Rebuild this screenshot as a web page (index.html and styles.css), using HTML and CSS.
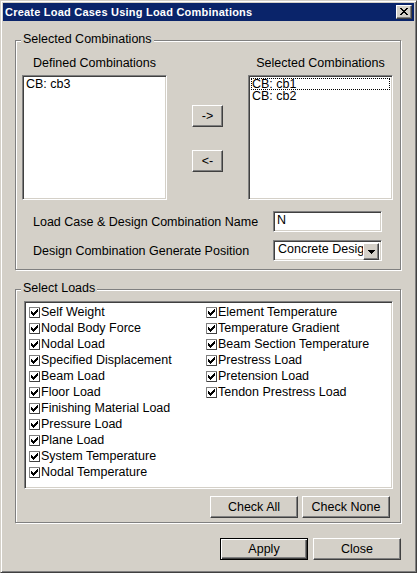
FILE: index.html
```html
<!DOCTYPE html>
<html>
<head>
<meta charset="utf-8">
<title>Create Load Cases Using Load Combinations</title>
<link rel="stylesheet" href="styles.css">
</head>
<body>
<div class="window">
  <div class="titlebar">
    <span class="title">Create Load Cases Using Load Combinations</span>
    <div class="close-btn raised">
      <svg width="8" height="7" viewBox="0 0 8 7" shape-rendering="crispEdges"><path fill="#000" d="M0 0h2v1H0zM6 0h2v1H6zM1 1h2v1H1zM5 1h2v1H5zM2 2h4v1H2zM3 3h2v1H3zM2 4h4v1H2zM1 5h2v1H1zM5 5h2v1H5zM0 6h2v1H0zM6 6h2v1H6z"/></svg>
    </div>
  </div>
  <div class="content">
    <div class="group group-combos">
      <span class="caption">Selected Combinations</span>
      <div class="combo-grid">
        <div class="col-label">Defined Combinations</div>
        <div></div>
        <div class="col-label">Selected Combinations</div>
        <div class="listbox sunken">
          <div class="list-item">CB: cb3</div>
        </div>
        <div class="move-btns">
          <div class="btn raised move">-&gt;</div>
          <div class="btn raised move">&lt;-</div>
        </div>
        <div class="listbox sunken">
          <div class="list-item focused">CB: cb1</div>
          <div class="list-item">CB: cb2</div>
        </div>
      </div>
      <div class="field-row first">
        <span class="field-label">Load Case &amp; Design Combination Name</span>
        <div class="textbox sunken">N</div>
      </div>
      <div class="field-row">
        <span class="field-label">Design Combination Generate Position</span>
        <div class="combo sunken">
          <span class="combo-text">Concrete Design</span>
          <div class="combo-arrow raised">
            <svg width="7" height="4" viewBox="0 0 7 4" shape-rendering="crispEdges"><path fill="#000" d="M0 0h7v1H0zM1 1h5v1H1zM2 2h3v1H2zM3 3h1v1H3z"/></svg>
          </div>
        </div>
      </div>
    </div>

    <div class="group group-loads">
      <span class="caption">Select Loads</span>
      <div class="checklist sunken">
        <div class="check-col first-col">
          <div class="check-item"><svg class="cb" width="11" height="11" viewBox="0 0 11 11" shape-rendering="crispEdges"><rect x="0" y="0" width="11" height="11" fill="#808080"/><rect x="1" y="1" width="10" height="10" fill="#404040"/><rect x="1" y="1" width="9" height="9" fill="#fff"/><path fill="#000" d="M2 4h1v3H2zM3 5h1v3H3zM4 6h1v3H4zM5 5h1v3H5zM6 4h1v3H6zM7 3h1v3H7zM8 2h1v3H8z"/></svg>Self Weight</div>
          <div class="check-item"><svg class="cb" width="11" height="11" viewBox="0 0 11 11" shape-rendering="crispEdges"><rect x="0" y="0" width="11" height="11" fill="#808080"/><rect x="1" y="1" width="10" height="10" fill="#404040"/><rect x="1" y="1" width="9" height="9" fill="#fff"/><path fill="#000" d="M2 4h1v3H2zM3 5h1v3H3zM4 6h1v3H4zM5 5h1v3H5zM6 4h1v3H6zM7 3h1v3H7zM8 2h1v3H8z"/></svg>Nodal Body Force</div>
          <div class="check-item"><svg class="cb" width="11" height="11" viewBox="0 0 11 11" shape-rendering="crispEdges"><rect x="0" y="0" width="11" height="11" fill="#808080"/><rect x="1" y="1" width="10" height="10" fill="#404040"/><rect x="1" y="1" width="9" height="9" fill="#fff"/><path fill="#000" d="M2 4h1v3H2zM3 5h1v3H3zM4 6h1v3H4zM5 5h1v3H5zM6 4h1v3H6zM7 3h1v3H7zM8 2h1v3H8z"/></svg>Nodal Load</div>
          <div class="check-item"><svg class="cb" width="11" height="11" viewBox="0 0 11 11" shape-rendering="crispEdges"><rect x="0" y="0" width="11" height="11" fill="#808080"/><rect x="1" y="1" width="10" height="10" fill="#404040"/><rect x="1" y="1" width="9" height="9" fill="#fff"/><path fill="#000" d="M2 4h1v3H2zM3 5h1v3H3zM4 6h1v3H4zM5 5h1v3H5zM6 4h1v3H6zM7 3h1v3H7zM8 2h1v3H8z"/></svg>Specified Displacement</div>
          <div class="check-item"><svg class="cb" width="11" height="11" viewBox="0 0 11 11" shape-rendering="crispEdges"><rect x="0" y="0" width="11" height="11" fill="#808080"/><rect x="1" y="1" width="10" height="10" fill="#404040"/><rect x="1" y="1" width="9" height="9" fill="#fff"/><path fill="#000" d="M2 4h1v3H2zM3 5h1v3H3zM4 6h1v3H4zM5 5h1v3H5zM6 4h1v3H6zM7 3h1v3H7zM8 2h1v3H8z"/></svg>Beam Load</div>
          <div class="check-item"><svg class="cb" width="11" height="11" viewBox="0 0 11 11" shape-rendering="crispEdges"><rect x="0" y="0" width="11" height="11" fill="#808080"/><rect x="1" y="1" width="10" height="10" fill="#404040"/><rect x="1" y="1" width="9" height="9" fill="#fff"/><path fill="#000" d="M2 4h1v3H2zM3 5h1v3H3zM4 6h1v3H4zM5 5h1v3H5zM6 4h1v3H6zM7 3h1v3H7zM8 2h1v3H8z"/></svg>Floor Load</div>
          <div class="check-item"><svg class="cb" width="11" height="11" viewBox="0 0 11 11" shape-rendering="crispEdges"><rect x="0" y="0" width="11" height="11" fill="#808080"/><rect x="1" y="1" width="10" height="10" fill="#404040"/><rect x="1" y="1" width="9" height="9" fill="#fff"/><path fill="#000" d="M2 4h1v3H2zM3 5h1v3H3zM4 6h1v3H4zM5 5h1v3H5zM6 4h1v3H6zM7 3h1v3H7zM8 2h1v3H8z"/></svg>Finishing Material Load</div>
          <div class="check-item"><svg class="cb" width="11" height="11" viewBox="0 0 11 11" shape-rendering="crispEdges"><rect x="0" y="0" width="11" height="11" fill="#808080"/><rect x="1" y="1" width="10" height="10" fill="#404040"/><rect x="1" y="1" width="9" height="9" fill="#fff"/><path fill="#000" d="M2 4h1v3H2zM3 5h1v3H3zM4 6h1v3H4zM5 5h1v3H5zM6 4h1v3H6zM7 3h1v3H7zM8 2h1v3H8z"/></svg>Pressure Load</div>
          <div class="check-item"><svg class="cb" width="11" height="11" viewBox="0 0 11 11" shape-rendering="crispEdges"><rect x="0" y="0" width="11" height="11" fill="#808080"/><rect x="1" y="1" width="10" height="10" fill="#404040"/><rect x="1" y="1" width="9" height="9" fill="#fff"/><path fill="#000" d="M2 4h1v3H2zM3 5h1v3H3zM4 6h1v3H4zM5 5h1v3H5zM6 4h1v3H6zM7 3h1v3H7zM8 2h1v3H8z"/></svg>Plane Load</div>
          <div class="check-item"><svg class="cb" width="11" height="11" viewBox="0 0 11 11" shape-rendering="crispEdges"><rect x="0" y="0" width="11" height="11" fill="#808080"/><rect x="1" y="1" width="10" height="10" fill="#404040"/><rect x="1" y="1" width="9" height="9" fill="#fff"/><path fill="#000" d="M2 4h1v3H2zM3 5h1v3H3zM4 6h1v3H4zM5 5h1v3H5zM6 4h1v3H6zM7 3h1v3H7zM8 2h1v3H8z"/></svg>System Temperature</div>
          <div class="check-item"><svg class="cb" width="11" height="11" viewBox="0 0 11 11" shape-rendering="crispEdges"><rect x="0" y="0" width="11" height="11" fill="#808080"/><rect x="1" y="1" width="10" height="10" fill="#404040"/><rect x="1" y="1" width="9" height="9" fill="#fff"/><path fill="#000" d="M2 4h1v3H2zM3 5h1v3H3zM4 6h1v3H4zM5 5h1v3H5zM6 4h1v3H6zM7 3h1v3H7zM8 2h1v3H8z"/></svg>Nodal Temperature</div>
        </div>
        <div class="check-col">
          <div class="check-item"><svg class="cb" width="11" height="11" viewBox="0 0 11 11" shape-rendering="crispEdges"><rect x="0" y="0" width="11" height="11" fill="#808080"/><rect x="1" y="1" width="10" height="10" fill="#404040"/><rect x="1" y="1" width="9" height="9" fill="#fff"/><path fill="#000" d="M2 4h1v3H2zM3 5h1v3H3zM4 6h1v3H4zM5 5h1v3H5zM6 4h1v3H6zM7 3h1v3H7zM8 2h1v3H8z"/></svg>Element Temperature</div>
          <div class="check-item"><svg class="cb" width="11" height="11" viewBox="0 0 11 11" shape-rendering="crispEdges"><rect x="0" y="0" width="11" height="11" fill="#808080"/><rect x="1" y="1" width="10" height="10" fill="#404040"/><rect x="1" y="1" width="9" height="9" fill="#fff"/><path fill="#000" d="M2 4h1v3H2zM3 5h1v3H3zM4 6h1v3H4zM5 5h1v3H5zM6 4h1v3H6zM7 3h1v3H7zM8 2h1v3H8z"/></svg>Temperature Gradient</div>
          <div class="check-item"><svg class="cb" width="11" height="11" viewBox="0 0 11 11" shape-rendering="crispEdges"><rect x="0" y="0" width="11" height="11" fill="#808080"/><rect x="1" y="1" width="10" height="10" fill="#404040"/><rect x="1" y="1" width="9" height="9" fill="#fff"/><path fill="#000" d="M2 4h1v3H2zM3 5h1v3H3zM4 6h1v3H4zM5 5h1v3H5zM6 4h1v3H6zM7 3h1v3H7zM8 2h1v3H8z"/></svg>Beam Section Temperature</div>
          <div class="check-item"><svg class="cb" width="11" height="11" viewBox="0 0 11 11" shape-rendering="crispEdges"><rect x="0" y="0" width="11" height="11" fill="#808080"/><rect x="1" y="1" width="10" height="10" fill="#404040"/><rect x="1" y="1" width="9" height="9" fill="#fff"/><path fill="#000" d="M2 4h1v3H2zM3 5h1v3H3zM4 6h1v3H4zM5 5h1v3H5zM6 4h1v3H6zM7 3h1v3H7zM8 2h1v3H8z"/></svg>Prestress Load</div>
          <div class="check-item"><svg class="cb" width="11" height="11" viewBox="0 0 11 11" shape-rendering="crispEdges"><rect x="0" y="0" width="11" height="11" fill="#808080"/><rect x="1" y="1" width="10" height="10" fill="#404040"/><rect x="1" y="1" width="9" height="9" fill="#fff"/><path fill="#000" d="M2 4h1v3H2zM3 5h1v3H3zM4 6h1v3H4zM5 5h1v3H5zM6 4h1v3H6zM7 3h1v3H7zM8 2h1v3H8z"/></svg>Pretension Load</div>
          <div class="check-item"><svg class="cb" width="11" height="11" viewBox="0 0 11 11" shape-rendering="crispEdges"><rect x="0" y="0" width="11" height="11" fill="#808080"/><rect x="1" y="1" width="10" height="10" fill="#404040"/><rect x="1" y="1" width="9" height="9" fill="#fff"/><path fill="#000" d="M2 4h1v3H2zM3 5h1v3H3zM4 6h1v3H4zM5 5h1v3H5zM6 4h1v3H6zM7 3h1v3H7zM8 2h1v3H8z"/></svg>Tendon Prestress Load</div>
        </div>
      </div>
      <div class="check-buttons">
        <div class="btn raised">Check All</div>
        <div class="btn raised">Check None</div>
      </div>
    </div>

    <div class="footer">
      <div class="btn raised default">Apply</div>
      <div class="btn raised">Close</div>
    </div>
  </div>
</div>
</body>
</html>
```

FILE: styles.css
```css
* {
  box-sizing: border-box;
}

html, body {
  margin: 0;
  padding: 0;
  background: #d4d0c8;
}

body {
  font-family: "Liberation Sans", Arial, sans-serif;
  font-size: 12.5px;
  line-height: 14px;
  color: #000;
}

.window {
  width: 417px;
  height: 573px;
  background: #d4d0c8;
  border: 1px solid;
  border-color: #d4d0c8 #404040 #404040 #d4d0c8;
  box-shadow: inset 1px 1px 0 #fff, inset -1px -1px 0 #808080;
  padding: 2px;
  display: flex;
  flex-direction: column;
}

/* ---------- title bar ---------- */
.titlebar {
  height: 18px;
  flex: none;
  background: #0a246a;
  display: flex;
  align-items: center;
  padding: 0 2px 0 2px;
}

.title {
  flex: 1;
  color: #fff;
  font-weight: bold;
  font-size: 11px;
  letter-spacing: 0.22px;
  line-height: 18px;
  white-space: nowrap;
}

.raised {
  background: #d4d0c8;
  border: 1px solid;
  border-color: #fff #404040 #404040 #fff;
  box-shadow: inset -1px -1px 0 #808080, inset 1px 1px 0 #d4d0c8;
}

.close-btn {
  width: 16px;
  height: 14px;
  display: flex;
  align-items: center;
  justify-content: center;
  padding: 0 0 1px 0;
}

.close-btn svg {
  display: block;
}

/* ---------- content ---------- */
.content {
  flex: 1;
  padding: 0 12px;
  display: flex;
  flex-direction: column;
}

.sunken {
  background: #fff;
  border: 1px solid;
  border-color: #808080 #fff #fff #808080;
  box-shadow: inset 1px 1px 0 #404040, inset -1px -1px 0 #d4d0c8;
}

.group {
  position: relative;
  margin-right: 1px;
  border: 1px solid #808080;
  box-shadow: inset 1px 1px 0 #fff, 1px 1px 0 #fff;
}

.caption {
  position: absolute;
  top: -9px;
  left: 5px;
  padding: 0 2px;
  background: #d4d0c8;
  line-height: 14px;
  white-space: nowrap;
}

/* ---------- group 1 ---------- */
.group-combos {
  margin-top: 19px;
  height: 230px;
  padding: 15px 7px 8px 6px;
}

.combo-grid {
  display: grid;
  grid-template-columns: 145px 81px 145px;
  grid-template-rows: 14px 125px;
  row-gap: 5px;
}

.col-label {
  text-align: center;
  white-space: nowrap;
  line-height: 14px;
}

.listbox {
  padding: 2px 2px;
  overflow: hidden;
}

.list-item {
  height: 12px;
  line-height: 12px;
  padding-left: 1px;
  white-space: nowrap;
}

.list-item.focused {
  outline: 1px dotted #000;
  outline-offset: -1px;
}

.move-btns {
  display: flex;
  flex-direction: column;
  align-items: center;
  padding-top: 30px;
  gap: 23px;
}

.btn {
  display: flex;
  align-items: center;
  justify-content: center;
  width: 88px;
  height: 22px;
  white-space: nowrap;
  line-height: 14px;
  padding-bottom: 1px;
}

.btn.move {
  width: 31px;
}

.field-row {
  display: flex;
  align-items: center;
  justify-content: space-between;
  height: 21px;
  margin-top: 8px;
  padding: 0 11px 0 11px;
}

.field-row.first {
  margin-top: 11px;
}

.field-label {
  white-space: nowrap;
}

.textbox {
  width: 109px;
  height: 21px;
  padding: 2px 3px;
  line-height: 13px;
}

.combo {
  width: 109px;
  height: 21px;
  padding: 2px;
  display: flex;
}

.combo-text {
  flex: 1;
  overflow: hidden;
  white-space: nowrap;
  padding-left: 2px;
  line-height: 13px;
}

.combo-arrow {
  width: 16px;
  height: 17px;
  flex: none;
  display: flex;
  align-items: center;
  justify-content: center;
}

.combo-arrow svg {
  display: block;
}

/* ---------- group 2 ---------- */
.group-loads {
  margin-top: 19px;
  height: 234px;
  padding: 11px 7px 4px 8px;
}

.checklist {
  height: 188px;
  padding: 2px 2px;
  display: flex;
}

.check-col.first-col {
  width: 179px;
  flex: none;
  padding-left: 2px;
}

.check-item {
  height: 16px;
  display: flex;
  align-items: center;
  white-space: nowrap;
  font-size: 12.5px;
}

.cb {
  display: block;
  flex: none;
  margin-right: 1px;
}

.check-buttons {
  display: flex;
  justify-content: flex-end;
  gap: 4px;
  margin-top: 7px;
  padding-right: 3px;
}

/* ---------- footer ---------- */
.footer {
  display: flex;
  justify-content: flex-end;
  gap: 5px;
  margin-top: 15px;
  padding-right: 1px;
}

.btn.default {
  border: 1px solid #000;
  box-shadow: inset 1px 1px 0 #fff, inset -1px -1px 0 #404040, inset -2px -2px 0 #808080;
}
```
